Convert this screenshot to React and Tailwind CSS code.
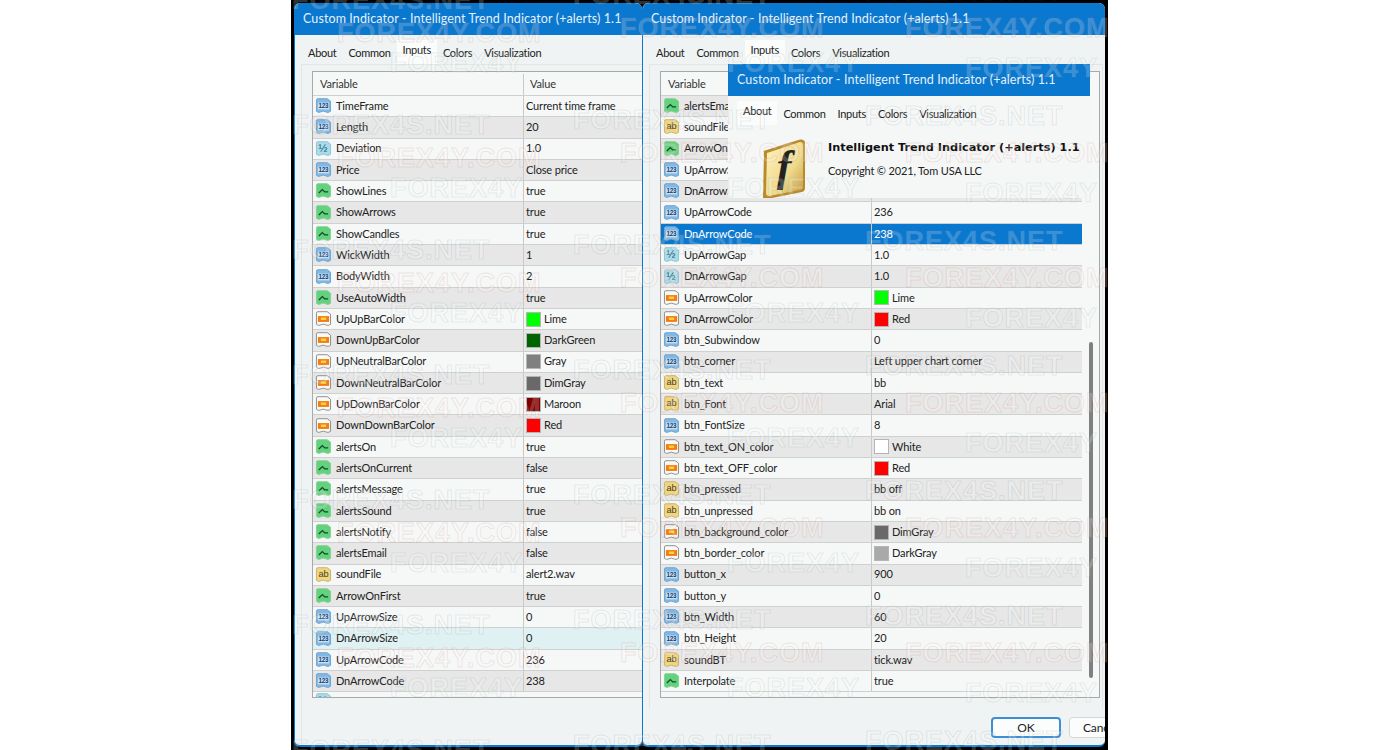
import React from 'react';

const docShape = 'M1.5 3 Q1.5 1.5 3 1.5 H12.5 L16 4 V14.5 Q13.5 16.5 11 15 Q8.5 13.5 6 15 Q3.5 16.5 1.5 14.5 Z';

// little type icons of the inputs table
const TypeIcon = ({ type }) => {
  if (type === 'bool') {
    return (
      <svg width="17" height="18" viewBox="0 0 17.5 18" className="shrink-0">
        <path d={docShape} fill="#62d27c" stroke="#86cf98" />
        <path d="M4 11 L7.5 7.5 L10 10 H13.5" fill="none" stroke="#12492a" strokeWidth="1.3" />
      </svg>
    );
  }
  if (type === 'str') {
    return (
      <svg width="17" height="18" viewBox="0 0 17.5 18" className="shrink-0">
        <path d={docShape} fill="#f0d682" stroke="#c9b26c" />
        <text x="8.7" y="11.5" textAnchor="middle" fontSize="9.5" fontFamily="Liberation Sans, sans-serif" fill="#4a4020">ab</text>
      </svg>
    );
  }
  if (type === 'color') {
    return (
      <svg width="17" height="18" viewBox="0 0 17.5 18" className="shrink-0">
        <path d={docShape} fill="#fafaf8" stroke="#8c8c8c" />
        <rect x="3" y="6" width="11.5" height="6" fill="#f57c12" />
        <rect x="6" y="7.5" width="5.5" height="2.5" fill="#fbd33f" />
      </svg>
    );
  }
  if (type === 'frac') {
    return (
      <svg width="17" height="18" viewBox="0 0 17.5 18" className="shrink-0">
        <path d={docShape} fill="#a9dcea" stroke="#8ec3d6" />
        <text x="8" y="12" textAnchor="middle" fontSize="11" fontFamily="Liberation Sans, sans-serif" fill="#27566b">½</text>
      </svg>
    );
  }
  return (
    <svg width="17" height="18" viewBox="0 0 17.5 18" className="shrink-0">
      <path d={docShape} fill="#82b8e4" stroke="#6fa3cf" />
      <rect x="3" y="5.5" width="11.5" height="7" fill="#c9e0f3" />
      <text x="8.7" y="11.5" textAnchor="middle" fontSize="6.5" fontWeight="700" fontFamily="Liberation Sans, sans-serif" fill="#17406b">123</text>
    </svg>
  );
};

const leftRows = [
  ['num', 'TimeFrame', 'Current time frame'],
  ['num', 'Length', '20'],
  ['frac', 'Deviation', '1.0'],
  ['num', 'Price', 'Close price'],
  ['bool', 'ShowLines', 'true'],
  ['bool', 'ShowArrows', 'true'],
  ['bool', 'ShowCandles', 'true'],
  ['num', 'WickWidth', '1'],
  ['num', 'BodyWidth', '2'],
  ['bool', 'UseAutoWidth', 'true'],
  ['color', 'UpUpBarColor', 'Lime', '#00ff00'],
  ['color', 'DownUpBarColor', 'DarkGreen', '#006400'],
  ['color', 'UpNeutralBarColor', 'Gray', '#808080'],
  ['color', 'DownNeutralBarColor', 'DimGray', '#696969'],
  ['color', 'UpDownBarColor', 'Maroon', '#800000'],
  ['color', 'DownDownBarColor', 'Red', '#ff0000'],
  ['bool', 'alertsOn', 'true'],
  ['bool', 'alertsOnCurrent', 'false'],
  ['bool', 'alertsMessage', 'true'],
  ['bool', 'alertsSound', 'true'],
  ['bool', 'alertsNotify', 'false'],
  ['bool', 'alertsEmail', 'false'],
  ['str', 'soundFile', 'alert2.wav'],
  ['bool', 'ArrowOnFirst', 'true'],
  ['num', 'UpArrowSize', '0'],
  ['num', 'DnArrowSize', '0'],
  ['num', 'UpArrowCode', '236'],
  ['num', 'DnArrowCode', '238'],
];

const rightRows = [
  ['bool', 'alertsEmail', 'false'],
  ['str', 'soundFile', 'alert2.wav'],
  ['bool', 'ArrowOnFirst', 'true'],
  ['num', 'UpArrowSize', '0'],
  ['num', 'DnArrowSize', '0'],
  ['num', 'UpArrowCode', '236'],
  ['num', 'DnArrowCode', '238'],
  ['frac', 'UpArrowGap', '1.0'],
  ['frac', 'DnArrowGap', '1.0'],
  ['color', 'UpArrowColor', 'Lime', '#00ff00'],
  ['color', 'DnArrowColor', 'Red', '#ff0000'],
  ['num', 'btn_Subwindow', '0'],
  ['num', 'btn_corner', 'Left upper chart corner'],
  ['str', 'btn_text', 'bb'],
  ['str', 'btn_Font', 'Arial'],
  ['num', 'btn_FontSize', '8'],
  ['color', 'btn_text_ON_color', 'White', '#ffffff'],
  ['color', 'btn_text_OFF_color', 'Red', '#ff0000'],
  ['str', 'btn_pressed', 'bb off'],
  ['str', 'btn_unpressed', 'bb on'],
  ['color', 'btn_background_color', 'DimGray', '#696969'],
  ['color', 'btn_border_color', 'DarkGray', '#a9a9a9'],
  ['num', 'button_x', '900'],
  ['num', 'button_y', '0'],
  ['num', 'btn_Width', '60'],
  ['num', 'btn_Height', '20'],
  ['str', 'soundBT', 'tick.wav'],
  ['bool', 'Interpolate', 'true'],
];

const Row = ({ row, index, firstWhite, selected, tinted }) => {
  const [type, name, value, color] = row;
  const gray = firstWhite ? index % 2 === 1 : index % 2 === 0;
  let bg = gray ? 'bg-[#e7e7e7]' : 'bg-[#f6f8f8]';
  if (tinted) bg = 'bg-[#dff1f2]';
  if (selected) bg = 'bg-[#0b78d0] text-white';
  return (
    <div className={`flex h-[21.3px] shrink-0 items-center border-b border-[#cfd1d1] ${bg}`}>
      <div className="flex h-full w-[211px] shrink-0 items-center gap-[4px] border-r border-[#c8caca] pl-[2px]">
        <TypeIcon type={type} />
        <span className="whitespace-nowrap">{name}</span>
      </div>
      <div className="flex items-center gap-[3px] whitespace-nowrap pl-[2px]">
        {color && <span className="h-[15px] w-[15px] border border-[#b5b5b5]" style={{ backgroundColor: color }} />}
        <span>{value}</span>
      </div>
    </div>
  );
};

const Tabs = ({ active, pad }) => (
  <div className={`flex h-[24px] items-end tracking-[-0.3px] text-[#222] ${pad}`}>
    {['About', 'Common', 'Inputs', 'Colors', 'Visualization'].map((t) => (
      <div
        key={t}
        className={t === active ? 'flex h-[24px] items-center bg-[#fbfcfc] px-[6px] pb-[4px]' : 'flex h-[22px] items-center px-[6px] pb-[0px]'}
      >
        {t}
      </div>
    ))}
  </div>
);

const Header = () => (
  <div className="flex h-[24px] shrink-0 items-center border-b border-[#cfd1d1] pt-[2px] text-[#333]">
    <div className="flex h-full w-[211px] shrink-0 items-center border-r border-[#c8caca] pl-[7px]">Variable</div>
    <div className="pl-[6px]">Value</div>
  </div>
);

const Title = ({ pad }) => (
  <div className={`flex h-[32px] shrink-0 items-center bg-[#0b78d0] text-[12.5px] tracking-[0.1px] text-[#e4f1fb] ${pad}`}>
    <span className="whitespace-nowrap">Custom Indicator - Intelligent Trend Indicator (+alerts) 1.1</span>
  </div>
);

// tiled broker watermark that sits over the whole screenshot
const redMark = 'text-white/20 [-webkit-text-stroke:1px_rgba(190,120,100,0.18)]';
const grayMark = 'text-white/20 [-webkit-text-stroke:1px_rgba(110,125,125,0.16)]';
const greenMark = 'text-white/20 [-webkit-text-stroke:1px_rgba(110,150,130,0.16)]';
const tile = [
  { text: 'FOREX4S.NET', left: 865, top: 103, cls: grayMark },
  { text: 'FOREX4Y.COM', left: 905, top: 15, cls: redMark },
  { text: 'FOREX4Y', left: 965, top: 55, cls: greenMark },
  { text: 'FOREX4S.NET', left: 573, top: 107, cls: grayMark },
  { text: 'FOREX4Y.COM', left: 620, top: 15, cls: redMark },
  { text: 'FOREX4Y', left: 727, top: 50, cls: greenMark },
  { text: 'FOREX4S.NET', left: 292, top: 112, cls: grayMark },
  { text: 'FOREX4Y.COM', left: 337, top: 20, cls: redMark },
  { text: 'FOREX4Y', left: 390, top: 50, cls: greenMark },
];

const Watermarks = () => {
  const marks = [];
  [-1, 0, 1, 2, 3, 4, 5].forEach((k) => {
    tile.forEach((m) => marks.push({ ...m, left: m.left - 291, top: m.top + k * 125 }));
  });
  return (
    <div className="pointer-events-none absolute inset-0 overflow-hidden font-['Liberation_Sans_Narrow','Liberation_Sans',sans-serif] text-[27px] font-bold leading-none tracking-normal">
      {marks.map((m, i) => (
        <span key={i} className={`absolute whitespace-nowrap tracking-[1px] ${m.cls}`} style={{ left: m.left, top: m.top }}>
          {m.text}
        </span>
      ))}
    </div>
  );
};

export default function App() {
  return (
    <div className="flex h-[750px] w-[1400px] overflow-hidden bg-white font-['Lato','Liberation_Sans',sans-serif] text-[11px] tracking-[-0.15px] text-[#222]">
      <div className="relative ml-[291px] flex h-[750px] w-[817px] bg-black pb-[3px] pl-[3px] pr-[2px] pt-[3px]">
        {/* left window */}
        <div className="flex h-full w-[348px] shrink-0 flex-col overflow-hidden rounded-[6px] border-b-2 border-l border-[#0b78d0] bg-[#f0f3f3]">
          <Title pad="pl-[8px]" />
          <div className="pt-[5px]">
            <Tabs active="Inputs" pad="pl-[7px]" />
          </div>
          <div className="ml-[6px] flex-1 border-l border-t border-[#e4e6e6] pl-[10px] pt-[6px]">
            <div className="flex h-[627px] flex-col overflow-hidden border-y border-l border-[#a8aaaa] bg-[#f6f8f8]">
              <Header />
              {leftRows.map((r, i) => (
                <Row key={r[1]} row={r} index={i} firstWhite tinted={r[1] === 'DnArrowSize'} />
              ))}
              <div className="h-[6px] shrink-0 overflow-hidden pl-[2px]">
                <TypeIcon type="frac" />
              </div>
            </div>
          </div>
        </div>

        {/* right window */}
        <div className="flex h-full w-[463px] shrink-0 flex-col overflow-hidden rounded-[6px] border-b-2 border-l border-[#0b78d0] bg-[#f0f3f3]">
          <Title pad="pl-[8px]" />
          <div className="pt-[5px]">
            <Tabs active="Inputs" pad="pl-[7px]" />
          </div>
          <div className="ml-[6px] mr-[2px] border-l border-r border-t border-[#e4e6e6] pb-[10px] pl-[10px] pr-[2px] pt-[6px]">
            <div className="flex h-[627px] overflow-hidden border border-[#a8aaaa] bg-[#f6f8f8]">
              <div className="flex w-[421px] shrink-0 flex-col overflow-hidden">
                <Header />
                {rightRows.map((r, i) => (
                  <Row key={r[1]} row={r} index={i} selected={r[1] === 'DnArrowCode'} />
                ))}
              </div>
              <div className="flex flex-1 flex-col pl-[7px] pt-[270px]">
                <div className="h-[336px] w-[4px] rounded-full bg-[#7f8181]" />
              </div>
            </div>
          </div>
          <div className="mt-[9px] flex gap-[8px] pl-[348px]">
            <button className="h-[21px] w-[70px] shrink-0 rounded-[4px] border-2 border-[#3b8fd6] bg-[#fbfcfc] text-[12px]">OK</button>
            <button className="h-[21px] w-[70px] shrink-0 rounded-[4px] border border-[#d5d7d7] bg-[#fbfcfc] pl-[13px] text-left text-[12px]">Cancel</button>
          </div>
        </div>

        {/* About dialog on top of the right window */}
        <div className="absolute left-[437px] top-[64px] flex h-[134px] w-[362px] flex-col overflow-hidden bg-[#f5f7f7]">
          <Title pad="pl-[9px]" />
          <div className="pt-[5px]">
            <Tabs active="About" pad="pl-[9px]" />
          </div>
          <div className="flex pl-[34px] pt-[14px]">
            <svg width="44" height="62" viewBox="0 0 44 62" className="shrink-0">
              <defs>
                <linearGradient id="gold" x1="0" y1="0" x2="1" y2="1">
                  <stop offset="0" stopColor="#fff3c0" />
                  <stop offset="0.6" stopColor="#efd98c" />
                  <stop offset="1" stopColor="#c49a3c" />
                </linearGradient>
              </defs>
              <path d="M2 13 Q1 12 3 11.5 L38 0.5 Q43 0 43 4 L43 49 Q43 52 40 53 L5 60 Q1 61 1 58 Z" fill="#b98a2c" />
              <path d="M5 14 L38 3 Q41 3 41 6 L41 47 Q41 50 38 51 L7 57 Q4 57 4 54 Z" fill="url(#gold)" />
              <text x="22" y="42" textAnchor="middle" fontSize="44" fontStyle="italic" fontWeight="700" fontFamily="Liberation Serif, serif" fill="#222">f</text>
            </svg>
            <div className="pl-[22px]">
              <div className="mt-[1px] whitespace-nowrap font-['DejaVu_Sans',sans-serif] text-[11.3px] font-bold tracking-normal text-[#111]">Intelligent Trend Indicator (+alerts) 1.1</div>
              <div className="mt-[6px] whitespace-nowrap">Copyright © 2021, Tom USA LLC</div>
            </div>
          </div>
        </div>

        <Watermarks />
      </div>
    </div>
  );
}
